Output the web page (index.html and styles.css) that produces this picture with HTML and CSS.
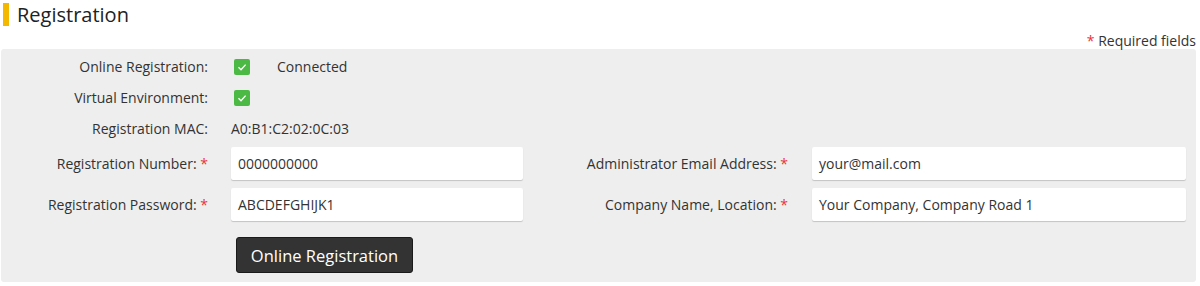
FILE: index.html
```html
<!DOCTYPE html>
<html>
<head>
<meta charset="utf-8">
<link rel="stylesheet" href="styles.css">
</head>
<body>
<div class="page">
  <h1 class="title">Registration</h1>
  <div class="req-note"><span class="star">*</span> Required fields</div>
  <div class="panel">
    <div class="row">
      <div class="label">Online Registration:</div>
      <div class="value"><span class="check"><svg viewBox="0 0 16 16" width="16" height="16"><path d="M4.5 8.3 L7 10.8 L11.6 5.6" fill="none" stroke="#fff" stroke-width="1.4"/></svg></span><span class="connected">Connected</span></div>
    </div>
    <div class="row">
      <div class="label">Virtual Environment:</div>
      <div class="value"><span class="check"><svg viewBox="0 0 16 16" width="16" height="16"><path d="M4.5 8.3 L7 10.8 L11.6 5.6" fill="none" stroke="#fff" stroke-width="1.4"/></svg></span></div>
    </div>
    <div class="row">
      <div class="label">Registration MAC:</div>
      <div class="value">A0:B1:C2:02:0C:03</div>
    </div>
    <div class="grid">
      <div class="label left">Registration Number: <span class="star">*</span></div>
      <div class="input">0000000000</div>
      <div class="label right">Administrator Email Address: <span class="star">*</span></div>
      <div class="input">your@mail.com</div>
      <div class="label left">Registration Password: <span class="star">*</span></div>
      <div class="input">ABCDEFGHIJK1</div>
      <div class="label right">Company Name, Location: <span class="star">*</span></div>
      <div class="input">Your Company, Company Road 1</div>
    </div>
    <div class="actions">
      <button class="btn">Online Registration</button>
    </div>
  </div>
</div>
</body>
</html>
```
FILE: styles.css
```css
html, body {
  margin: 0;
  padding: 0;
  background: #fff;
}
body {
  font-family: "Open Sans", "Liberation Sans", sans-serif;
  font-size: 14px;
  color: #333;
}
.page {
  padding: 3px 4px 0 1px;
  width: 1195px;
}
.title {
  margin: 0 0 0 2px;
  border-left: 6px solid #f5b800;
  padding-left: 8px;
  font-size: 20px;
  font-weight: normal;
  line-height: 23px;
  height: 23px;
  color: #222;
}
.req-note {
  text-align: right;
  margin-top: 7px;
  line-height: 16px;
  height: 16px;
  font-size: 14px;
}
.star {
  color: #e8343a;
}
.panel {
  background: #eeeeee;
  border-radius: 3px;
  padding: 2px 11px 9px 0;
}
.row {
  display: grid;
  grid-template-columns: 207px 1fr;
  column-gap: 23px;
  height: 31px;
  align-items: center;
}
.label {
  text-align: right;
  white-space: nowrap;
}
.value {
  display: flex;
  align-items: center;
}
.check {
  display: inline-flex;
  width: 16px;
  height: 16px;
  margin-left: 3px;
  background: #4cb944;
  border-radius: 2px;
}
.connected {
  margin-left: 27px;
}
.grid {
  margin-top: 3px;
  display: grid;
  grid-template-columns: 230px 292px 289px 374px;
  row-gap: 8px;
  align-items: center;
}
.grid .left {
  padding-right: 23px;
}
.grid .right {
  padding-right: 24px;
}
.input {
  height: 33px;
  background: #fff;
  border-radius: 2px;
  box-shadow: 0 1px 1px rgba(0,0,0,0.18);
  box-sizing: border-box;
  padding: 0 7px;
  line-height: 33px;
  font-size: 14px;
  color: #333;
}
.actions {
  margin-top: 16px;
  padding-left: 235px;
}
.btn {
  display: block;
  background: #333333;
  color: #fff;
  border: 1px solid #1a1a1a;
  border-radius: 3px;
  font-family: "Open Sans", "Liberation Sans", sans-serif;
  font-size: 16.5px;
  height: 36px;
  padding: 0;
  width: 177px;
}
```
